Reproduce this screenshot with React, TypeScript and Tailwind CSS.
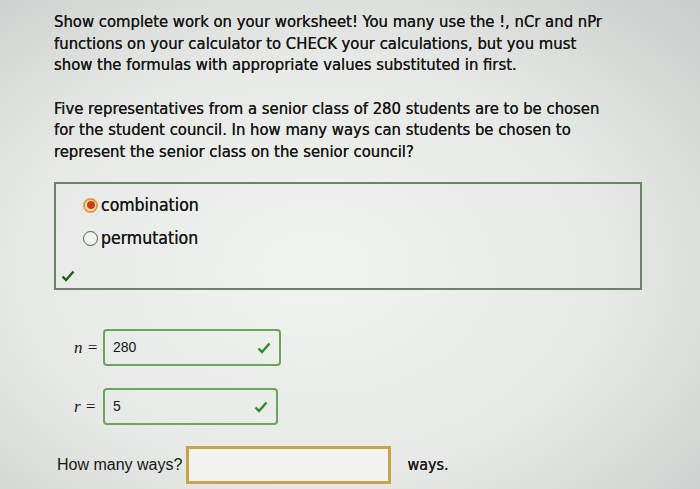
export default function App() {
    return (
        <div
            className="relative h-[489px] w-[700px] overflow-hidden bg-[radial-gradient(ellipse_at_45%_55%,#f1f3ef_0%,#e6e9e5_55%,#c9cdcb_100%)] text-[#161616]"
            style={{ fontFamily: '"DejaVu Sans Condensed", "DejaVu Sans", sans-serif' }}
        >
            <div className="flex flex-col pl-[54px] pt-[11px]">
                <p className="whitespace-nowrap text-[16.5px] leading-[21.5px] [text-shadow:0_0_0.4px_#161616]">
                    Show complete work on your worksheet! You many use the !, nCr and nPr
                    <br />
                    functions on your calculator to CHECK your calculations, but you must
                    <br />
                    show the formulas with appropriate values substituted in first.
                </p>
                <p className="mt-[22px] whitespace-nowrap text-[16.5px] leading-[21.5px] [text-shadow:0_0_0.4px_#161616]">
                    Five representatives from a senior class of 280 students are to be chosen
                    <br />
                    for the student council. In how many ways can students be chosen to
                    <br />
                    represent the senior class on the senior council?
                </p>

                <div className="mt-[20px] flex h-[108px] w-[588px] flex-col border-2 border-[#6f806f] pl-[27px] pt-[8px]">
                    <label className="flex items-center gap-[3px] text-[17.5px] [text-shadow:0_0_0.4px_#161616]">
                        <span className="flex size-[15px] items-center justify-center rounded-full border-2 border-[#e39a3c] bg-[#f6e4c8]">
                            <span className="size-[8px] rounded-full bg-[#c8400f]" />
                        </span>
                        combination
                    </label>
                    <label className="mt-[7px] flex items-center gap-[3px] text-[17.5px] [text-shadow:0_0_0.4px_#161616]">
                        <span className="size-[15px] rounded-full border border-[#555] bg-[#f3f3f3]" />
                        permutation
                    </label>
                    <svg className="-ml-[22px] mt-[18px]" width="14" height="12" viewBox="0 0 14 12">
                        <path d="M1.5 6.5 L5 10 L12.5 1.5" fill="none" stroke="#1f5a1f" strokeWidth="2.4" />
                    </svg>
                </div>

                <div className="mt-[39px] flex items-center">
                    <span className="w-[49px] pl-[20px] text-[17px] italic" style={{ fontFamily: '"Liberation Serif", serif' }}>
                        n =
                    </span>
                    <div className="flex h-[37px] w-[178px] items-center justify-between rounded-[4px] border-2 border-[#6aa65a] pl-[8px] pr-[8px]">
                        <span className="text-[14px]" style={{ fontFamily: '"Liberation Sans", sans-serif' }}>280</span>
                        <svg width="14" height="12" viewBox="0 0 14 12">
                            <path d="M1.5 6.5 L5 10 L12.5 1.5" fill="none" stroke="#2f8a2f" strokeWidth="2.4" />
                        </svg>
                    </div>
                </div>

                <div className="mt-[22px] flex items-center">
                    <span className="w-[49px] pl-[20px] text-[17px] italic" style={{ fontFamily: '"Liberation Serif", serif' }}>
                        r =
                    </span>
                    <div className="flex h-[37px] w-[175px] items-center justify-between rounded-[4px] border-2 border-[#6aa65a] pl-[8px] pr-[8px]">
                        <span className="text-[14px]" style={{ fontFamily: '"Liberation Sans", sans-serif' }}>5</span>
                        <svg width="14" height="12" viewBox="0 0 14 12">
                            <path d="M1.5 6.5 L5 10 L12.5 1.5" fill="none" stroke="#2f8a2f" strokeWidth="2.4" />
                        </svg>
                    </div>
                </div>

                <div className="mt-[21px] flex items-center">
                    <span className="pl-[3px] text-[16px]" style={{ fontFamily: '"Liberation Sans", sans-serif' }}>How many ways?</span>
                    <div className="ml-[4px] h-[38px] w-[205px] border-[3px] border-[#c9a24e] bg-[#f2f3ee]" />
                    <span className="ml-[16px] text-[16px] [text-shadow:0_0_0.4px_#161616]">ways.</span>
                </div>
            </div>
        </div>
    )
}
